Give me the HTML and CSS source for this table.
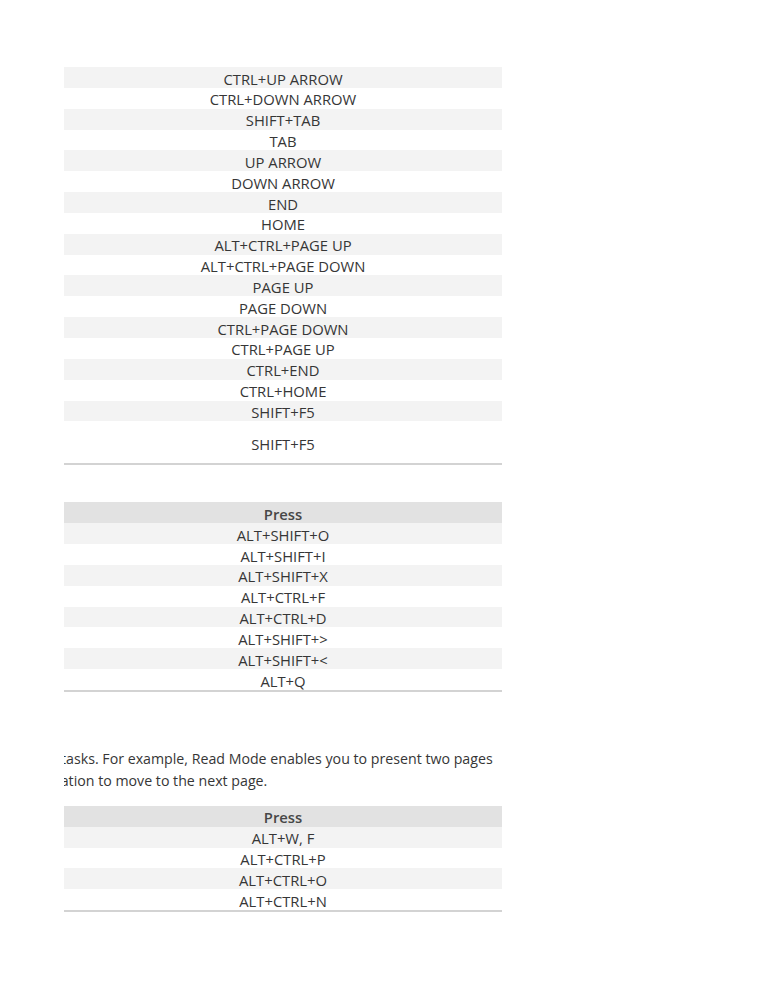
FILE: index.html
```html
<!DOCTYPE html>
<html>
<head>
<meta charset="utf-8">
<link rel="stylesheet" href="styles.css">
</head>
<body>
<div class="page">
  <table class="keys t1">
    <tbody>
      <tr><td>CTRL+UP ARROW</td></tr>
      <tr><td>CTRL+DOWN ARROW</td></tr>
      <tr><td>SHIFT+TAB</td></tr>
      <tr><td>TAB</td></tr>
      <tr><td>UP ARROW</td></tr>
      <tr><td>DOWN ARROW</td></tr>
      <tr><td>END</td></tr>
      <tr><td>HOME</td></tr>
      <tr><td>ALT+CTRL+PAGE UP</td></tr>
      <tr><td>ALT+CTRL+PAGE DOWN</td></tr>
      <tr><td>PAGE UP</td></tr>
      <tr><td>PAGE DOWN</td></tr>
      <tr><td>CTRL+PAGE DOWN</td></tr>
      <tr><td>CTRL+PAGE UP</td></tr>
      <tr><td>CTRL+END</td></tr>
      <tr><td>CTRL+HOME</td></tr>
      <tr><td>SHIFT+F5</td></tr>
      <tr class="tall"><td>SHIFT+F5</td></tr>
    </tbody>
  </table>

  <table class="keys t2">
    <thead><tr><th>Press</th></tr></thead>
    <tbody>
      <tr><td>ALT+SHIFT+O</td></tr>
      <tr><td>ALT+SHIFT+I</td></tr>
      <tr><td>ALT+SHIFT+X</td></tr>
      <tr><td>ALT+CTRL+F</td></tr>
      <tr><td>ALT+CTRL+D</td></tr>
      <tr><td>ALT+SHIFT+&gt;</td></tr>
      <tr><td>ALT+SHIFT+&lt;</td></tr>
      <tr><td>ALT+Q</td></tr>
    </tbody>
  </table>

  <div class="para">
    <span class="line l1">tasks. For example, Read Mode enables you to present two pages</span>
    <span class="line l2">gation to move to the next page.</span>
  </div>

  <table class="keys t3">
    <thead><tr><th>Press</th></tr></thead>
    <tbody>
      <tr><td>ALT+W, F</td></tr>
      <tr><td>ALT+CTRL+P</td></tr>
      <tr><td>ALT+CTRL+O</td></tr>
      <tr><td>ALT+CTRL+N</td></tr>
    </tbody>
  </table>
</div>
</body>
</html>
```

FILE: styles.css
```css
html, body {
  margin: 0;
  padding: 0;
  background: #ffffff;
}
body {
  font-family: "Open Sans", "Noto Sans", "Liberation Sans", sans-serif;
  color: #363636;
  font-size: 14.8px;
}
.page {
  margin-left: 64px;
  width: 438px;
  padding-top: 67px;
  overflow: hidden;
}
.keys {
  width: 100%;
  border-collapse: collapse;
  border-bottom: 2px solid #d3d3d3;
}
.keys td, .keys th {
  padding: 3.5px 0 0 0;
  line-height: 17.35px;
  text-align: center;
  white-space: nowrap;
}
.keys th {
  background: #e2e2e2;
  font-weight: 600;
  color: #474747;
}
.keys tbody tr:nth-child(odd) td {
  background: #f3f3f3;
}
.t1 tr.tall td {
  background: #ffffff;
  line-height: 38.5px;
}
.t2 {
  margin-top: 37px;
}
.para {
  margin-top: 56px;
  line-height: 22px;
  font-size: 14.2px;
}
.line {
  display: block;
  white-space: nowrap;
}
.l1 { margin-left: -3px; }
.l2 { margin-left: -11px; }
.t3 {
  margin-top: 14px;
}
```
